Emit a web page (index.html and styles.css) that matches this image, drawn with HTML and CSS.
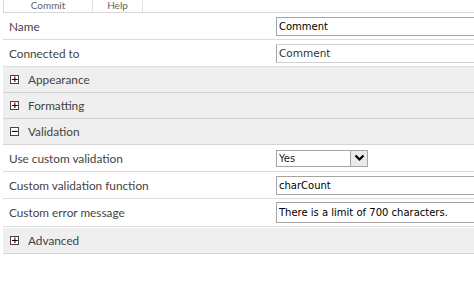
FILE: index.html
```html
<!DOCTYPE html>
<html lang="en">
<head>
    <meta charset="UTF-8">
    <title>Column Properties</title>
    <link rel="stylesheet" href="styles.css">
</head>
<body>
    <div class="panel">
        <div class="tabs">
            <div class="tab tab-commit">Commit</div>
            <div class="tab tab-help">Help</div>
        </div>
        <div class="row">
            <div class="label">Name</div>
            <div class="value"><input class="field" type="text" value="Comment"></div>
        </div>
        <div class="row">
            <div class="label">Connected to</div>
            <div class="value"><input class="field readonly" type="text" value="Comment" readonly></div>
        </div>
        <div class="section"><span class="toggle">+</span>Appearance</div>
        <div class="section"><span class="toggle">+</span>Formatting</div>
        <div class="section"><span class="toggle">&minus;</span>Validation</div>
        <div class="row">
            <div class="label">Use custom validation</div>
            <div class="value">
                <div class="select">
                    <span class="select-text">Yes</span>
                    <span class="select-btn">
                        <svg width="11" height="8" viewBox="0 0 11 8"><path d="M1.5 1.5 L5.5 5.5 L9.5 1.5" fill="none" stroke="#000" stroke-width="2.2"/></svg>
                    </span>
                </div>
            </div>
        </div>
        <div class="row">
            <div class="label">Custom validation function</div>
            <div class="value"><input class="field" type="text" value="charCount"></div>
        </div>
        <div class="row row-tall">
            <div class="label">Custom error message</div>
            <div class="value"><input class="field field-tall" type="text" value="There is a limit of 700 characters."></div>
        </div>
        <div class="section section-last"><span class="toggle">+</span>Advanced</div>
    </div>
</body>
</html>
```
FILE: styles.css
```css
body {
    margin: 0;
    background-color: #fff;
    font-family: 'Lato', 'Open Sans', sans-serif;
    color: #444;
}
.panel {
    margin-left: 3px;
}
.tabs {
    display: flex;
    height: 12px;
    border-left: 1px solid #d6d6d6;
    border-bottom: 1px solid #d6d6d6;
    overflow: hidden;
}
.tab {
    font-size: 10px;
    line-height: 11px;
    color: #666;
    text-align: center;
    border-right: 1px solid #e2e2e2;
}
.tab-commit {
    width: 88px;
}
.tab-help {
    width: 49px;
}
.row {
    display: flex;
    align-items: center;
    height: 26px;
    border-bottom: 1px solid #dcdcdc;
}
.row-tall {
    height: 27px;
}
.label {
    width: 273px;
    box-sizing: border-box;
    padding-left: 6px;
    font-size: 11.8px;
    flex-shrink: 0;
}
.value {
    flex: 1;
    display: flex;
}
.field {
    width: 100%;
    height: 19px;
    box-sizing: border-box;
    margin: 0;
    padding: 0 2px;
    border: 1px solid #a5a5a5;
    border-right: none;
    font-family: 'DejaVu Sans', sans-serif;
    font-size: 10px;
    color: #000;
    outline: none;
}
.field-tall {
    height: 21px;
}
.field.readonly {
    border-color: #d0d0d0;
    border-left-color: #a5a5a5;
    color: #333;
    font-size: 10.5px;
}
.section {
    display: flex;
    align-items: center;
    height: 25px;
    background-color: #efefef;
    border-bottom: 1px solid #d4d4d4;
    font-size: 11.8px;
    color: #444;
}
.section-last {
    margin-top: 1px;
}
.toggle {
    width: 7px;
    height: 7px;
    margin-left: 7px;
    margin-right: 9px;
    border: 1px solid #444;
    background-color: #fff;
    font-family: 'DejaVu Sans', sans-serif;
    font-size: 9px;
    line-height: 7px;
    text-align: center;
    color: #000;
    font-weight: bold;
}
.select {
    display: flex;
    width: 92px;
    height: 17px;
    box-sizing: border-box;
    border: 1px solid #a5a5a5;
}
.select-text {
    flex: 1;
    padding-left: 2px;
    font-family: 'DejaVu Sans', sans-serif;
    font-size: 10px;
    line-height: 15px;
    color: #222;
}
.select-btn {
    width: 16px;
    display: flex;
    align-items: center;
    justify-content: center;
    background-color: #eaeaea;
    border-left: 1px solid #a5a5a5;
}
```
